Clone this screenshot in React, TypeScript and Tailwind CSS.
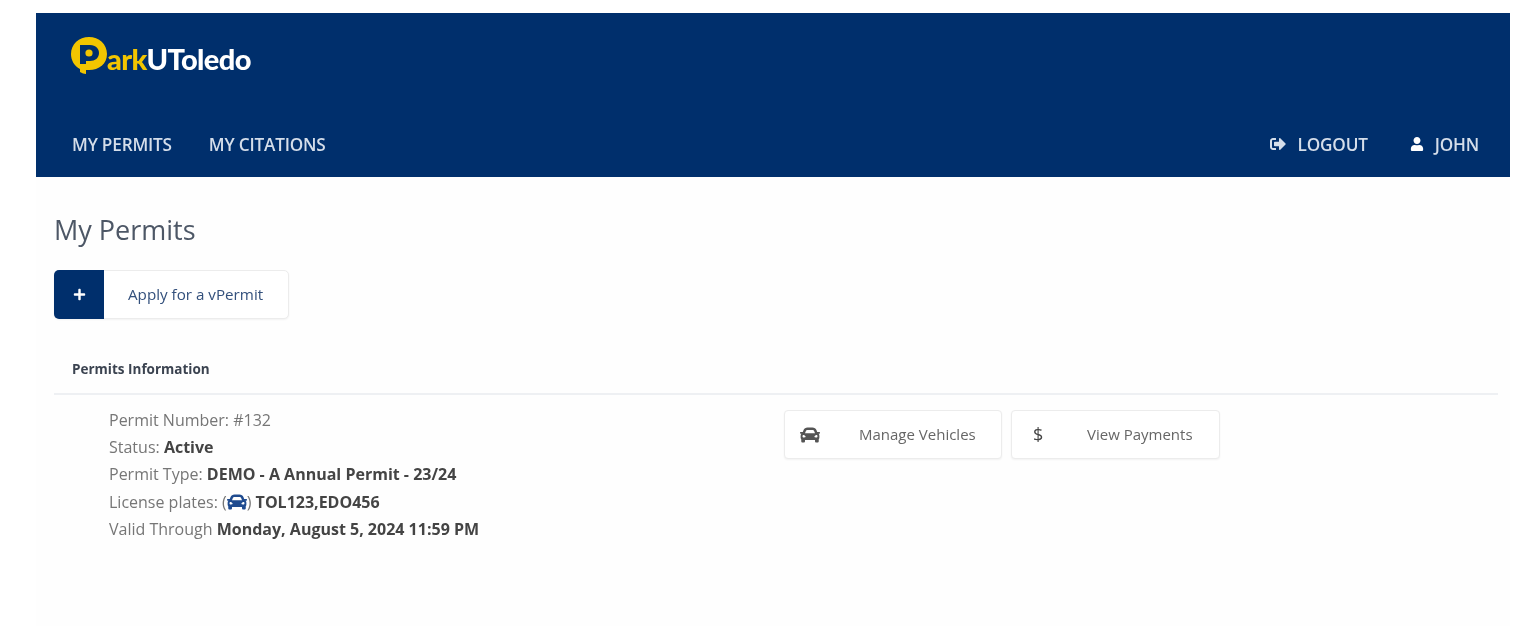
import { FaCar, FaPlus, FaSignOutAlt, FaUser } from "react-icons/fa";

function Logo() {
  return (
    <div className="flex items-center h-[40px] relative">
      <svg width="38" height="40" viewBox="0 0 38 40" className="shrink-0 -ml-px">
        <path d="M9 37 V34 C3 31 0 25 0 19 C0 9 8 2 18 2 C28 2 36 9 36 19 C36 29 28 35 18 35 L15 35 L15 39 C13 39 11 38 9 37 Z" fill="#f2c500" />
        <path d="M9 29 V10 H19 C25 10 28 14 28 18 C28 23 24 26 19 26 H15 V29 Z" fill="#002f6c" />
        <circle cx="18" cy="18" r="3.6" fill="#f2c500" />
      </svg>
      <span className="ml-[-2px] mt-[6px] font-['Lato','Open_Sans',sans-serif] font-black text-[29px] leading-none tracking-[-0.6px]">
        <span className="text-[#f2c500]">ark</span>
        <span className="text-white">UToledo</span>
      </span>
    </div>
  );
}

function ActionButton({ icon, label, width, gap, pad }: { icon: React.ReactNode; label: string; width: string; gap: string; pad: string }) {
  return (
    <div className={`flex items-center h-[49px] bg-white border border-[#ececec] rounded-[4px] shadow-[0_1px_2px_rgba(0,0,0,0.05)] text-[#666] text-[15px] ${width} ${gap} ${pad}`}>
      {icon}
      <span>{label}</span>
    </div>
  );
}

export default function App() {
  return (
    <div className="min-h-[626px] bg-white pt-[13px] pl-[36px] pr-[26px] font-['Open_Sans',sans-serif] blur-[0.6px] overflow-hidden">
      <header className="h-[164px] bg-[#002f6c] flex flex-col justify-between pl-[36px] pr-[31px]">
        <div className="pt-[22px]">
          <Logo />
        </div>
        <nav className="flex items-center justify-between h-[64px] text-[17.2px] font-semibold text-[#d5deea] pb-[1px] tracking-[-0.2px]">
          <div className="flex gap-[37px]">
            <span>MY PERMITS</span>
            <span>MY CITATIONS</span>
          </div>
          <div className="flex gap-[42px]">
            <span className="flex items-center gap-[12px]">
              <FaSignOutAlt className="text-[16px]" />
              LOGOUT
            </span>
            <span className="flex items-center gap-[11px]">
              <FaUser className="text-[14px] text-white" />
              JOHN
            </span>
          </div>
        </nav>
      </header>

      <main className="bg-[#fefefe] pl-[18px] pr-[12px] h-[449px]">
        <h1 className="pt-[35px] text-[27px] leading-[36px] text-[#4d5766]">My Permits</h1>
        <div className="mt-[22px] flex items-stretch w-[235px] h-[49px] bg-white border border-[#ececec] rounded-[5px] shadow-[0_1px_2px_rgba(0,0,0,0.05)]">
          <div className="w-[50px] -ml-px -my-px bg-[#002f6c] rounded-l-[5px] flex items-center justify-center">
            <FaPlus className="text-white text-[13px]" />
          </div>
          <div className="flex-1 flex items-center pl-[24px] text-[15.2px] text-[#33507c]">Apply for a vPermit</div>
        </div>

        <div className="mt-[38px] h-[38px] pl-[18px] border-b-2 border-[#eef0f3] text-[13.5px] font-bold text-[#3b4350] leading-[24px]">
          Permits Information
        </div>

        <div className="flex pt-[12px]">
          <div className="w-[730px] pl-[55px] text-[16px] leading-[27.2px] text-[#767676] shrink-0">
            <div>Permit Number: #132</div>
            <div>
              Status: <b className="text-[#444] font-bold">Active</b>
            </div>
            <div>
              Permit Type: <b className="text-[#444] font-bold">DEMO - A Annual Permit - 23/24</b>
            </div>
            <div className="flex items-center">
              <span>License plates: (</span>
              <FaCar className="text-[#1f4b8f] text-[20px]" />
              <span>)&nbsp;</span>
              <b className="text-[#444] font-bold">TOL123,EDO456</b>
            </div>
            <div>
              Valid Through <b className="text-[#444] font-bold">Monday, August 5, 2024 11:59 PM</b>
            </div>
          </div>
          <div className="flex gap-[9px] pt-[3px]">
            <ActionButton
              icon={<FaCar className="text-[#555] text-[20px]" />}
              label="Manage Vehicles"
              width="w-[218px]"
              gap="gap-[39px]"
              pad="pl-[15px]"
            />
            <ActionButton
              icon={<span className="text-[18px] text-[#444] w-[11px]">$</span>}
              label="View Payments"
              width="w-[209px]"
              gap="gap-[43px]"
              pad="pl-[21px]"
            />
          </div>
        </div>
      </main>
    </div>
  );
}
